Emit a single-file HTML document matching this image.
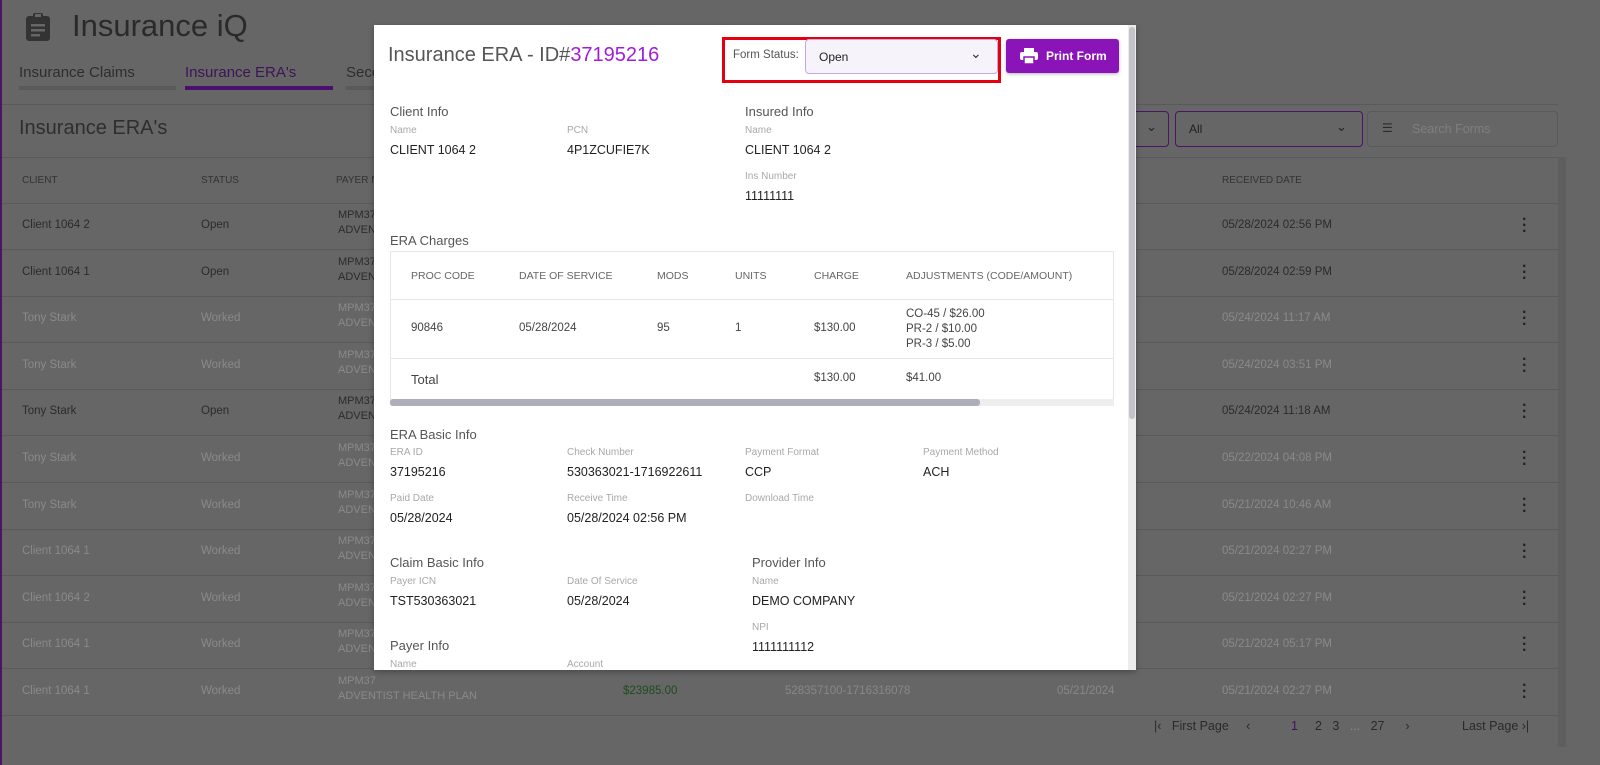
<!DOCTYPE html>
<html><head><meta charset="utf-8"><style>
*{margin:0;padding:0;box-sizing:border-box}
body{width:1600px;height:765px;overflow:hidden;background:#666;font-family:"Liberation Sans",sans-serif;position:relative}
.a{position:absolute;white-space:nowrap}
.bg{color:#2b2b2b}
.dim{color:#8a8a8a}
.line{position:absolute;left:2px;width:1556px;height:1px;background:#5a5a5a}
.m{color:#333}
.lbl{font-size:10px;color:#a8a8a8}
.val{font-size:12.5px;color:#222}
.sec{font-size:13px;color:#555}
.th{font-size:10.5px;color:#666}
.td{font-size:11.5px;color:#444}
</style></head><body>
<div class="a" style="left:0;top:0;width:2px;height:765px;background:#4b1466"></div>
<!-- header -->
<svg class="a" style="left:25px;top:12px" width="28" height="30" viewBox="0 0 28 30"><rect x="1" y="4" width="24" height="25" rx="3" fill="#333"/><rect x="8" y="1" width="10" height="6" rx="2" fill="#333"/><rect x="10" y="2" width="6" height="3" fill="#666"/><rect x="6" y="12" width="14" height="2.5" fill="#666"/><rect x="6" y="17" width="14" height="2.5" fill="#666"/><rect x="6" y="22" width="9" height="2.5" fill="#666"/></svg>
<div class="a" style="left:72px;top:8px;font-size:31px;color:#2a2a2a">Insurance iQ</div>
<div class="a" style="left:19px;top:64px;font-size:15px;color:#2e2e2e">Insurance Claims</div>
<div class="a" style="left:19px;top:86px;width:157px;height:4px;background:#5a5a5a"></div>
<div class="a" style="left:185px;top:64px;font-size:15px;color:#3e1456">Insurance ERA's</div>
<div class="a" style="left:185px;top:86px;width:148px;height:4px;background:#4b0f6e"></div>
<div class="a" style="left:346px;top:64px;font-size:15px;color:#2e2e2e">Seco</div>
<div class="a" style="left:346px;top:86px;width:30px;height:4px;background:#5a5a5a"></div>
<div class="line" style="top:104px"></div>
<div class="a" style="left:19px;top:117px;font-size:20px;color:#2e2e2e">Insurance ERA's</div>
<div class="a" style="left:1120px;top:111px;width:49px;height:36px;border:1px solid #4b1466;border-radius:4px"></div>
<div class="a" style="left:1146px;top:119px;font-size:13px;color:#222">⌄</div>
<div class="a" style="left:1175px;top:111px;width:188px;height:36px;border:1px solid #4b1466;border-radius:4px"></div>
<div class="a" style="left:1189px;top:122px;font-size:12px;color:#222">All</div>
<div class="a" style="left:1336px;top:119px;font-size:13px;color:#222">⌄</div>
<div class="a" style="left:1367px;top:111px;width:191px;height:36px;border:1px solid #5a5a5a;border-radius:4px"></div>
<div class="a" style="left:1382px;top:121px;font-size:12px;color:#2a2a2a">☰</div>
<div class="a" style="left:1412px;top:122px;font-size:12.5px;color:#7f7f7f">Search Forms</div>
<div class="line" style="top:157px"></div>
<div class="a" style="left:1558px;top:157px;width:8px;height:590px;background:#5e5e5e"></div>
<div class="a" style="left:22px;top:175px;font-size:10px;color:#333">CLIENT</div>
<div class="a" style="left:201px;top:175px;font-size:10px;color:#333">STATUS</div>
<div class="a" style="left:336px;top:175px;font-size:10px;color:#333">PAYER N</div>
<div class="a" style="left:1222px;top:175px;font-size:10px;color:#333">RECEIVED DATE</div>
<div class="line" style="top:203px"></div>
<div id="rows"></div>
<script>
var r=[["Client 1064 2","Open","05/28/2024 02:56 PM",1],["Client 1064 1","Open","05/28/2024 02:59 PM",1],["Tony Stark","Worked","05/24/2024 11:17 AM",0],["Tony Stark","Worked","05/24/2024 03:51 PM",0],["Tony Stark","Open","05/24/2024 11:18 AM",1],["Tony Stark","Worked","05/22/2024 04:08 PM",0],["Tony Stark","Worked","05/21/2024 10:46 AM",0],["Client 1064 1","Worked","05/21/2024 02:27 PM",0],["Client 1064 2","Worked","05/21/2024 02:27 PM",0],["Client 1064 1","Worked","05/21/2024 05:17 PM",0],["Client 1064 1","Worked","05/21/2024 02:27 PM",0]];
var h="";r.forEach(function(x,i){var y=226+i*46.6,c=x[3]?"#2b2b2b":"#8a8a8a";
h+='<div class="a" style="left:22px;top:'+(y-7)+'px;font-size:11.5px;color:'+c+'">'+x[0]+'</div>';
h+='<div class="a" style="left:201px;top:'+(y-7)+'px;font-size:11.5px;color:'+c+'">'+x[1]+'</div>';
h+='<div class="a" style="left:338px;top:'+(y-18)+'px;font-size:11px;line-height:15px;color:'+c+'">MPM37<br>ADVENTIST HEALTH PLAN</div>';
h+='<div class="a" style="left:1222px;top:'+(y-7)+'px;font-size:11.5px;color:'+c+'">'+x[2]+'</div>';
h+='<div class="a" style="left:1522px;top:'+(y-9)+'px;font-size:16px;font-weight:bold;color:#222;line-height:6px">·<br>·<br>·</div>';
h+='<div class="line" style="top:'+(y+23)+'px"></div>';});
document.getElementById("rows").innerHTML=h;
</script>
<div class="a" style="left:623px;top:685px;font-size:11.5px;color:#1e4d1e">$23985.00</div>
<div class="a" style="left:785px;top:685px;font-size:11.5px;color:#888">528357100-1716316078</div>
<div class="a" style="left:1057px;top:685px;font-size:11.5px;color:#888">05/21/2024</div>
<!-- pagination -->
<div class="a" style="left:1154px;top:719px;font-size:12.5px;color:#2a2a2a">|‹&nbsp;&nbsp; First Page &nbsp;&nbsp;&nbsp; ‹</div>
<div class="a" style="left:1291px;top:719px;font-size:12.5px;color:#3e1456">1</div>
<div class="a" style="left:1315px;top:719px;font-size:12.5px;color:#2a2a2a">2 &nbsp; 3 &nbsp; <span style="color:#888">...</span> &nbsp; 27 &nbsp;&nbsp;&nbsp;&nbsp; ›</div>
<div class="a" style="left:1462px;top:719px;font-size:12.5px;color:#2a2a2a">Last Page ›|</div>

<!-- modal -->
<div class="a" style="left:374px;top:25px;width:762px;height:645px;background:#fff;box-shadow:0 2px 6px rgba(0,0,0,.3);overflow:hidden">
<div class="a" style="right:0;top:0;width:8px;height:645px;background:#ececec"></div>
<div class="a" style="right:1px;top:2px;width:6px;height:392px;background:#c3c3c9;border-radius:3px"></div>
<div class="a" style="left:14px;top:19px;font-size:20px;color:#555">Insurance ERA - ID#<span style="color:#a21cdb">37195216</span></div>
<div class="a" style="left:348px;top:12px;width:279px;height:46px;border:3px solid #e3000f"></div>
<div class="a" style="left:359px;top:24px;font-size:11.5px;color:#555">Form Status:</div>
<div class="a" style="left:431px;top:14px;width:193px;height:35px;border:1px solid #c9a6e0;border-radius:4px;background:#f7f3fa"></div>
<div class="a" style="left:445px;top:25px;font-size:12px;color:#222">Open</div>
<div class="a" style="left:596px;top:20px;font-size:14px;color:#333">⌄</div>
<div class="a" style="left:632px;top:14px;width:113px;height:34px;background:#8b14b8;border-radius:3px;box-shadow:0 1px 3px rgba(0,0,0,.3)"></div>
<svg class="a" style="left:646px;top:23px" width="18" height="16" viewBox="0 0 18 16"><rect x="4" y="0" width="10" height="4" fill="#fff"/><rect x="0" y="4" width="18" height="8" rx="2" fill="#fff"/><rect x="4" y="9" width="10" height="7" fill="#fff" stroke="#8b14b8" stroke-width="1.5"/></svg>
<div class="a" style="left:672px;top:24px;font-size:12px;font-weight:bold;color:#fff">Print Form</div>

<div class="a sec" style="left:16px;top:79px">Client Info</div>
<div class="a lbl" style="left:16px;top:100px">Name</div>
<div class="a val" style="left:16px;top:118px">CLIENT 1064 2</div>
<div class="a lbl" style="left:193px;top:100px">PCN</div>
<div class="a val" style="left:193px;top:118px">4P1ZCUFIE7K</div>
<div class="a sec" style="left:371px;top:79px">Insured Info</div>
<div class="a lbl" style="left:371px;top:100px">Name</div>
<div class="a val" style="left:371px;top:118px">CLIENT 1064 2</div>
<div class="a lbl" style="left:371px;top:146px">Ins Number</div>
<div class="a val" style="left:371px;top:164px">11111111</div>

<div class="a sec" style="left:16px;top:208px">ERA Charges</div>
<div class="a" style="left:16px;top:226px;width:724px;height:155px;border:1px solid #e6e6e6"></div>
<div class="a th" style="left:37px;top:245px">PROC CODE</div>
<div class="a th" style="left:145px;top:245px">DATE OF SERVICE</div>
<div class="a th" style="left:283px;top:245px">MODS</div>
<div class="a th" style="left:361px;top:245px">UNITS</div>
<div class="a th" style="left:440px;top:245px">CHARGE</div>
<div class="a th" style="left:532px;top:245px">ADJUSTMENTS (CODE/AMOUNT)</div>
<div class="a" style="left:16px;top:274px;width:724px;height:1px;background:#e6e6e6"></div>
<div class="a td" style="left:37px;top:297px">90846</div>
<div class="a td" style="left:145px;top:297px">05/28/2024</div>
<div class="a td" style="left:283px;top:297px">95</div>
<div class="a td" style="left:361px;top:297px">1</div>
<div class="a td" style="left:440px;top:297px">$130.00</div>
<div class="a td" style="left:532px;top:282px;line-height:15px">CO-45 / $26.00<br>PR-2 / $10.00<br>PR-3 / $5.00</div>
<div class="a" style="left:16px;top:333px;width:724px;height:1px;background:#e6e6e6"></div>
<div class="a" style="left:37px;top:347px;font-size:13px;color:#444">Total</div>
<div class="a td" style="left:440px;top:347px">$130.00</div>
<div class="a td" style="left:532px;top:347px">$41.00</div>
<div class="a" style="left:16px;top:374px;width:724px;height:7px;background:#eee"></div>
<div class="a" style="left:16px;top:374px;width:590px;height:7px;background:#aeaeba;border-radius:3px"></div>

<div class="a sec" style="left:16px;top:402px">ERA Basic Info</div>
<div class="a lbl" style="left:16px;top:422px">ERA ID</div>
<div class="a val" style="left:16px;top:440px">37195216</div>
<div class="a lbl" style="left:193px;top:422px">Check Number</div>
<div class="a val" style="left:193px;top:440px">530363021-1716922611</div>
<div class="a lbl" style="left:371px;top:422px">Payment Format</div>
<div class="a val" style="left:371px;top:440px">CCP</div>
<div class="a lbl" style="left:549px;top:422px">Payment Method</div>
<div class="a val" style="left:549px;top:440px">ACH</div>
<div class="a lbl" style="left:16px;top:468px">Paid Date</div>
<div class="a val" style="left:16px;top:486px">05/28/2024</div>
<div class="a lbl" style="left:193px;top:468px">Receive Time</div>
<div class="a val" style="left:193px;top:486px">05/28/2024 02:56 PM</div>
<div class="a lbl" style="left:371px;top:468px">Download Time</div>

<div class="a sec" style="left:16px;top:530px">Claim Basic Info</div>
<div class="a lbl" style="left:16px;top:551px">Payer ICN</div>
<div class="a val" style="left:16px;top:569px">TST530363021</div>
<div class="a lbl" style="left:193px;top:551px">Date Of Service</div>
<div class="a val" style="left:193px;top:569px">05/28/2024</div>
<div class="a sec" style="left:378px;top:530px">Provider Info</div>
<div class="a lbl" style="left:378px;top:551px">Name</div>
<div class="a val" style="left:378px;top:569px">DEMO COMPANY</div>
<div class="a lbl" style="left:378px;top:597px">NPI</div>
<div class="a val" style="left:378px;top:615px">1111111112</div>
<div class="a sec" style="left:16px;top:613px">Payer Info</div>
<div class="a lbl" style="left:16px;top:634px">Name</div>
<div class="a lbl" style="left:193px;top:634px">Account</div>
</div>
</body></html>
